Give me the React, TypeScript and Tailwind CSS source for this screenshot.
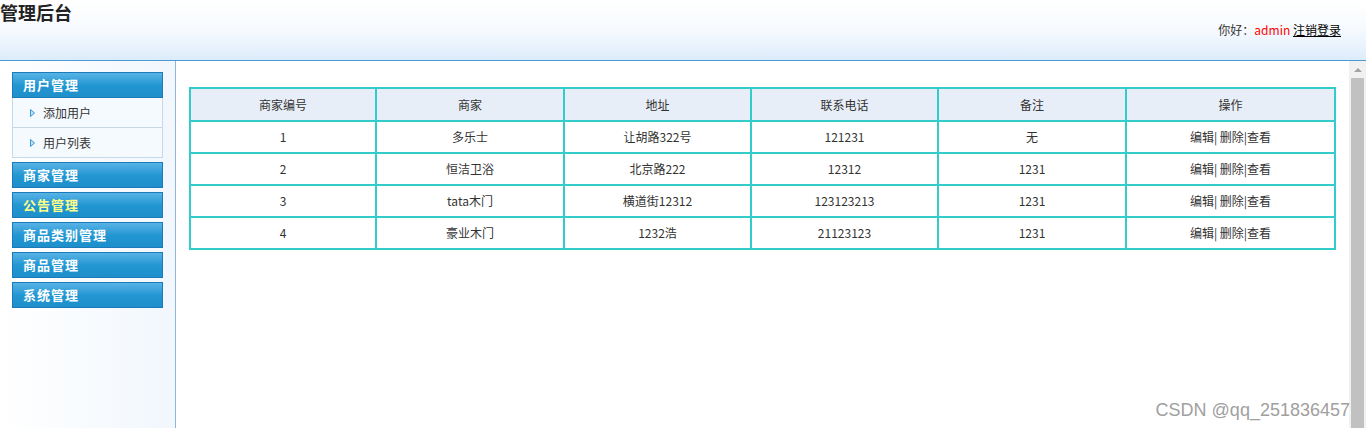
import React from "react";

const rows = [
  ["1", "多乐士", "让胡路322号", "121231", "无"],
  ["2", "恒洁卫浴", "北京路222", "12312", "1231"],
  ["3", "tata木门", "横道街12312", "123123213", "1231"],
  ["4", "豪业木门", "1232浩", "21123123", "1231"],
];

const heads = ["商家编号", "商家", "地址", "联系电话", "备注", "操作"];

function MenuHead({ label, yellow }: { label: string; yellow?: boolean }) {
  return (
    <div className="h-[26px] border border-[#1d7ab8] bg-gradient-to-b from-[#56b3e6] via-[#2297d2] to-[#1e8fcb] flex items-center pl-[10px]">
      <span
        className={`text-[13px] font-bold tracking-[1px] ${yellow ? "text-[#ffff88]" : "text-white"}`}
      >
        {label}
      </span>
    </div>
  );
}

function SubItem({ label }: { label: string }) {
  return (
    <div className="h-[30px] bg-[#f5faff] border-x border-b border-[#c5d9e8] flex items-center pl-[17px] gap-[8px]">
      <svg width="5" height="8" viewBox="0 0 5 8">
        <path d="M0.5 0.5 L4.5 4 L0.5 7.5 Z" fill="#bfe3f7" stroke="#3a98d4" strokeWidth="1" />
      </svg>
      <span className="text-[12px] text-[#333]">{label}</span>
    </div>
  );
}

export default function App() {
  return (
    <div
      className="w-[1366px] h-[428px] overflow-hidden bg-white flex flex-col relative"
      style={{ fontFamily: '"Noto Sans CJK SC", "Noto Sans", sans-serif' }}
    >
      {/* header */}
      <div className="h-[61px] shrink-0 border-b border-[#4b9ad8] bg-gradient-to-b from-white via-[#f6fafe] to-[#dcecfb] relative">
        <div className="text-[18px] font-bold text-[#222] leading-none pt-[3px] pl-0">管理后台</div>
        <div className="absolute right-[25px] top-[22px] text-[12px] text-[#333] leading-[16px]">
          你好：<span className="text-[#ff0000]">admin</span>{" "}
          <span className="underline text-black">注销登录</span>
        </div>
      </div>

      <div className="flex flex-1 min-h-0">
        {/* sidebar */}
        <div className="w-[176px] shrink-0 border-r border-[#8fb6d6] bg-gradient-to-r from-white to-[#f1f7fd] pt-[11px] pl-[12px]">
          <div className="w-[151px] flex flex-col">
            <MenuHead label="用户管理" />
            <SubItem label="添加用户" />
            <SubItem label="用户列表" />
            <div className="flex flex-col gap-[4px] mt-[4px]">
              <MenuHead label="商家管理" />
              <MenuHead label="公告管理" yellow />
              <MenuHead label="商品类别管理" />
              <MenuHead label="商品管理" />
              <MenuHead label="系统管理" />
            </div>
          </div>
        </div>

        {/* main */}
        <div className="flex-1 min-w-0 pl-[13px] pr-[13px] pt-[26px]">
          <table className="w-[1145px] border-collapse table-fixed text-[12px] text-[#333]">
            <colgroup>
              <col className="w-[186px]" />
              <col className="w-[188px]" />
              <col className="w-[187px]" />
              <col className="w-[187px]" />
              <col className="w-[188px]" />
              <col className="w-[209px]" />
            </colgroup>
            <thead>
              <tr>
                {heads.map((h) => (
                  <th
                    key={h}
                    className="border-2 border-[#33cccc] bg-[#e8eef7] h-[33px] font-normal text-center p-0"
                  >
                    {h}
                  </th>
                ))}
              </tr>
            </thead>
            <tbody>
              {rows.map((r) => (
                <tr key={r[0]}>
                  {r.map((c, i) => (
                    <td key={i} className="border-2 border-[#33cccc] h-[32px] text-center p-0">
                      {c}
                    </td>
                  ))}
                  <td className="border-2 border-[#33cccc] h-[32px] text-center p-0">编辑| 删除|查看</td>
                </tr>
              ))}
            </tbody>
          </table>
        </div>

        {/* scrollbar */}
        <div className="w-[17px] shrink-0 bg-[#f1f1f1] flex flex-col items-center">
          <div className="h-[17px] flex items-center justify-center">
            <div className="w-0 h-0 border-x-[4px] border-x-transparent border-b-[4px] border-b-[#a3a3a3]" />
          </div>
          <div className="w-[13px] flex-1 bg-[#c1c1c1]" />
        </div>
      </div>

      <div
        className="absolute right-[16px] bottom-[9px] text-[18px] text-[#a0a0a0] leading-none"
        style={{ fontFamily: '"Liberation Sans", Arial, sans-serif' }}
      >
        CSDN @qq_251836457
      </div>
    </div>
  );
}
